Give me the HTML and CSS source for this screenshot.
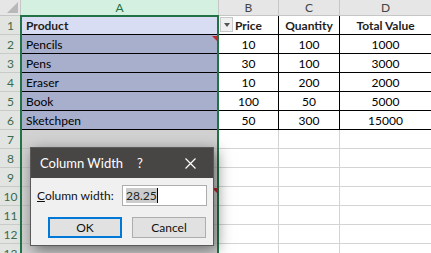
FILE: index.html
```html
<!DOCTYPE html>
<html>
<head>
<meta charset="utf-8">
<link rel="stylesheet" href="styles.css">
</head>
<body>
<div class="screen">
  <div class="sheet">
    <div class="corner"><span class="corner-tri"></span></div>
    <div class="colhead sel">A</div>
    <div class="colhead">B</div>
    <div class="colhead">C</div>
    <div class="colhead">D</div>

    <div class="rowhead">1</div>
    <div class="cell a hdr t">Product</div>
    <div class="cell num hdr t bv"><span class="filter"></span>Price</div>
    <div class="cell num hdr t bv">Quantity</div>
    <div class="cell num hdr t bv">Total Value</div>

    <div class="rowhead">2</div>
    <div class="cell a dat t">Pencils</div>
    <div class="cell num t bv">10</div>
    <div class="cell num t bv">100</div>
    <div class="cell num t bv">1000</div>

    <div class="rowhead">3</div>
    <div class="cell a dat t">Pens</div>
    <div class="cell num t bv">30</div>
    <div class="cell num t bv">100</div>
    <div class="cell num t bv">3000</div>

    <div class="rowhead">4</div>
    <div class="cell a dat t">Eraser</div>
    <div class="cell num t bv">10</div>
    <div class="cell num t bv">200</div>
    <div class="cell num t bv">2000</div>

    <div class="rowhead">5</div>
    <div class="cell a dat t">Book</div>
    <div class="cell num t bv">100</div>
    <div class="cell num t bv">50</div>
    <div class="cell num t bv">5000</div>

    <div class="rowhead">6</div>
    <div class="cell a dat t">Sketchpen</div>
    <div class="cell num t bv">50</div>
    <div class="cell num t bv">300</div>
    <div class="cell num t bv">15000</div>

    <div class="rowhead">7</div><div class="cell a gr"></div><div class="cell"></div><div class="cell"></div><div class="cell"></div>
    <div class="rowhead">8</div><div class="cell a gr"></div><div class="cell"></div><div class="cell"></div><div class="cell"></div>
    <div class="rowhead">9</div><div class="cell a gr"></div><div class="cell"></div><div class="cell"></div><div class="cell"></div>
    <div class="rowhead">10</div><div class="cell a gr"></div><div class="cell"></div><div class="cell"></div><div class="cell"></div>
    <div class="rowhead">11</div><div class="cell a gr"></div><div class="cell"></div><div class="cell"></div><div class="cell"></div>
    <div class="rowhead">12</div><div class="cell a gr"></div><div class="cell"></div><div class="cell"></div><div class="cell"></div>
    <div class="rowhead last">13</div><div class="cell a gr"></div><div class="cell"></div><div class="cell"></div><div class="cell"></div>
  </div>

  <div class="selection"></div>
  <span class="mark mark-a2"></span>
  <span class="mark mark-a10"></span>

  <div class="dialog">
    <div class="titlebar">
      <span class="title">Column Width</span>
      <span class="help">?</span>
      <span class="close">
        <svg width="11" height="11" viewBox="0 0 11 11"><path d="M0.5 0.5 L10.5 10.5 M10.5 0.5 L0.5 10.5" stroke="#ffffff" stroke-width="1.2" fill="none"/></svg>
      </span>
    </div>
    <div class="body">
      <div class="field">
        <span class="label"><u>C</u>olumn width:</span>
        <span class="input"><span class="selected">28.25</span><span class="caret"></span></span>
      </div>
      <div class="buttons">
        <span class="btn primary">OK</span>
        <span class="btn">Cancel</span>
      </div>
    </div>
  </div>
</div>
</body>
</html>
```

FILE: styles.css
```css
html, body {
  margin: 0;
  padding: 0;
  background: #ffffff;
}

.screen {
  position: relative;
  width: 431px;
  height: 253px;
  overflow: hidden;
  font-family: Lato, "Liberation Sans", sans-serif;
  font-size: 12px;
  color: #000000;
}

.sheet {
  display: grid;
  grid-template-columns: 21px 198px 60px 61px 92px;
  grid-template-rows: 16px repeat(13, 19px);
}

.sheet > div {
  box-sizing: border-box;
  display: flex;
  align-items: center;
  white-space: nowrap;
  overflow: hidden;
}

.corner {
  background: #e6e6e6;
  border-right: 1px solid #c6c6c6;
  border-bottom: 1px solid #c6c6c6;
  position: relative;
}

.corner-tri {
  position: absolute;
  right: 2px;
  bottom: 2px;
  width: 0;
  height: 0;
  border-left: 11px solid transparent;
  border-bottom: 11px solid #b8b8b8;
}

.colhead {
  background: #e6e6e6;
  color: #444444;
  justify-content: center;
  border-right: 1px solid #c6c6c6;
  border-bottom: 1px solid #c6c6c6;
  font-size: 12px;
}

.colhead.sel {
  background: #d3f0e0;
  color: #217346;
}

.rowhead {
  background: #e2e4e2;
  color: #3a6b4b;
  justify-content: center;
  border-bottom: 1px solid #c9cbc9;
  font-size: 12px;
}

.rowhead.last {
  align-items: flex-start;
  line-height: 14px;
  padding-top: 3px;
}

.cell {
  border-right: 1px solid #d4d4d4;
  border-bottom: 1px solid #d4d4d4;
  padding-left: 5px;
}

.cell.num {
  justify-content: center;
  padding-left: 0;
}

.cell.t {
  border-bottom: 1px solid #000000;
}

.cell.bv {
  border-right: 1px solid #000000;
}

.cell.hdr {
  font-weight: bold;
  color: #1e1e1e;
}

.cell.a.hdr {
  background: #d9ddf3;
}

.cell.a.dat {
  background: #a8afcc;
}

.cell.a.gr {
  background: #d2d2d2;
  border-bottom-color: #c2c2c2;
}

.cell.num.hdr {
  position: relative;
}

.filter {
  position: absolute;
  left: 1px;
  top: 1px;
  width: 13px;
  height: 15px;
  box-sizing: border-box;
  background: #f0f0f0;
  border: 1px solid #c8c8c8;
}

.filter::after {
  content: "";
  position: absolute;
  left: 3px;
  top: 5px;
  border-left: 3px solid transparent;
  border-right: 3px solid transparent;
  border-top: 4px solid #555555;
}

.selection {
  position: absolute;
  left: 20px;
  top: 15px;
  width: 199px;
  height: 260px;
  box-sizing: border-box;
  border-left: 2px solid #217346;
  border-right: 2px solid #217346;
  border-top: 2px solid #217346;
}

.mark {
  position: absolute;
  width: 0;
  height: 0;
  border-left: 5px solid transparent;
  border-top: 5px solid #c0262d;
}

.mark-a2 { left: 212px; top: 36px; }
.mark-a10 { left: 212px; top: 188px; }

.dialog {
  position: absolute;
  left: 30px;
  top: 147px;
  width: 184px;
  height: 99px;
  box-sizing: border-box;
  background: #f0f0f0;
  border: 1px solid #5a5a5a;
  box-shadow: 3px 4px 14px rgba(0, 0, 0, 0.5);
  font-family: Lato, "Liberation Sans", sans-serif;
}

.titlebar {
  height: 30px;
  background: #484644;
  color: #ffffff;
  display: flex;
  align-items: center;
  padding-left: 9px;
  font-size: 13px;
}

.title {
  flex: 1;
}

.help {
  width: 14px;
  margin-right: 34px;
  font-size: 13px;
}

.close {
  width: 11px;
  margin-right: 17px;
  display: flex;
}

.body {
  padding: 7px 6px 0 6px;
}

.field {
  display: flex;
  align-items: center;
  justify-content: space-between;
  height: 21px;
}

.label {
  font-size: 12px;
  color: #111111;
}

.input {
  width: 85px;
  height: 21px;
  box-sizing: border-box;
  background: #ffffff;
  border: 1px solid #adadad;
  display: flex;
  align-items: center;
  padding-left: 3px;
}

.selected {
  background: #cccccc;
  color: #222222;
  font-size: 12px;
  line-height: 15px;
}

.caret {
  width: 1px;
  height: 15px;
  background: #000000;
}

.buttons {
  display: flex;
  justify-content: flex-end;
  gap: 10px;
  margin-top: 11px;
  padding-right: 1px;
}

.btn {
  width: 74px;
  height: 21px;
  box-sizing: border-box;
  background: #e1e1e1;
  border: 1px solid #adadad;
  display: flex;
  align-items: center;
  justify-content: center;
  font-size: 12px;
  color: #111111;
}

.btn.primary {
  border: 2px solid #0078d7;
}
```
